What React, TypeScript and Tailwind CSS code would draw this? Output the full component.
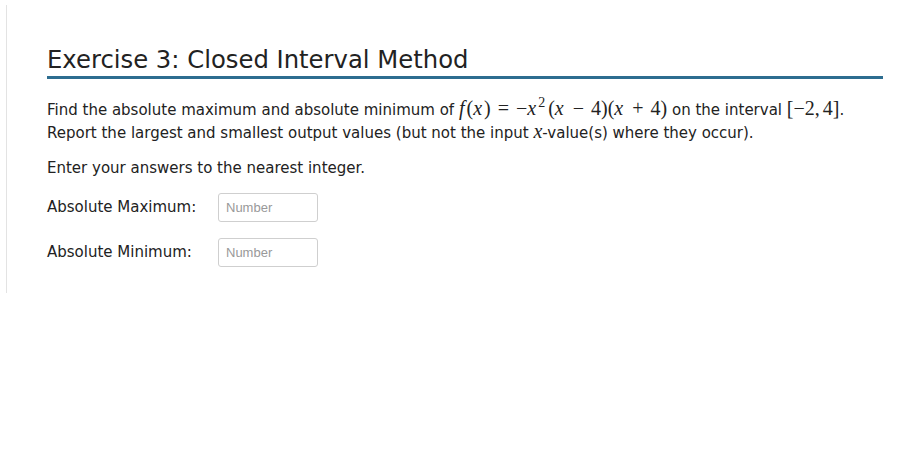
import React from 'react';

const MathVar: React.FC<{ children: React.ReactNode }> = ({ children }) => (
  <span className="italic mr-[2px]">{children}</span>
);

const Op: React.FC<{ children: React.ReactNode }> = ({ children }) => (
  <span className="mx-[7px]">{children}</span>
);

const AnswerRow: React.FC<{ label: string }> = ({ label }) => (
  <div className="flex items-center h-[29px]">
    <label className="w-[171px] text-[15px] text-[#222]">{label}</label>
    <input
      type="text"
      placeholder="Number"
      className="w-[100px] h-[29px] px-[7px] border border-[#cfcfcf] rounded-[3px] text-[13px] placeholder:text-[#999] focus:outline-none"
      style={{ fontFamily: '"Liberation Sans", Arial, sans-serif' }}
    />
  </div>
);

const App: React.FC = () => {
  const math = { fontFamily: '"Liberation Serif", "DejaVu Serif", serif' };

  return (
    <div
      className="w-[904px] h-[453px] bg-white pt-[5px]"
      style={{ fontFamily: '"DejaVu Sans", Verdana, sans-serif' }}
    >
      <div className="ml-[6px] border-l border-[#e3e3e3] h-[288px] pl-[40px] pr-[21px]">
        {/* Title */}
        <h1 className="pt-[40px] text-[24.3px] leading-[30px] text-[#222] pb-[1px] border-b-[3px] border-[#2d6d90]">
          Exercise 3: Closed Interval Method
        </h1>

        {/* Question */}
        <p className="mt-[19px] text-[15px] leading-[22px] text-[#222]">
          Find the absolute maximum and absolute minimum of{' '}
          <span className="text-[20px] leading-none" style={math}>
            <MathVar>f</MathVar>(<MathVar>x</MathVar>)<Op>=</Op>−<MathVar>x</MathVar>
            <span className="relative -top-[8px] text-[14px] leading-none mr-[3px]">2</span>(<MathVar>x</MathVar>
            <Op>−</Op>4)(<MathVar>x</MathVar>
            <Op>+</Op>4)
          </span>{' '}
          on the interval{' '}
          <span className="text-[20px] leading-none" style={math}>
            [−2,<span className="ml-[3px]">4]</span>
          </span>
          .
          <br />
          Report the largest and smallest output values (but not the input{' '}
          <span className="text-[20px] leading-none italic" style={math}>
            x
          </span>
          -value(s) where they occur).
        </p>

        <p className="mt-[13px] text-[15px] leading-[22px] text-[#222]">
          Enter your answers to the nearest integer.
        </p>

        {/* Answers */}
        <div className="mt-[14px] flex flex-col gap-[16px]">
          <AnswerRow label="Absolute Maximum:" />
          <AnswerRow label="Absolute Minimum:" />
        </div>
      </div>
    </div>
  );
};

export default App;
